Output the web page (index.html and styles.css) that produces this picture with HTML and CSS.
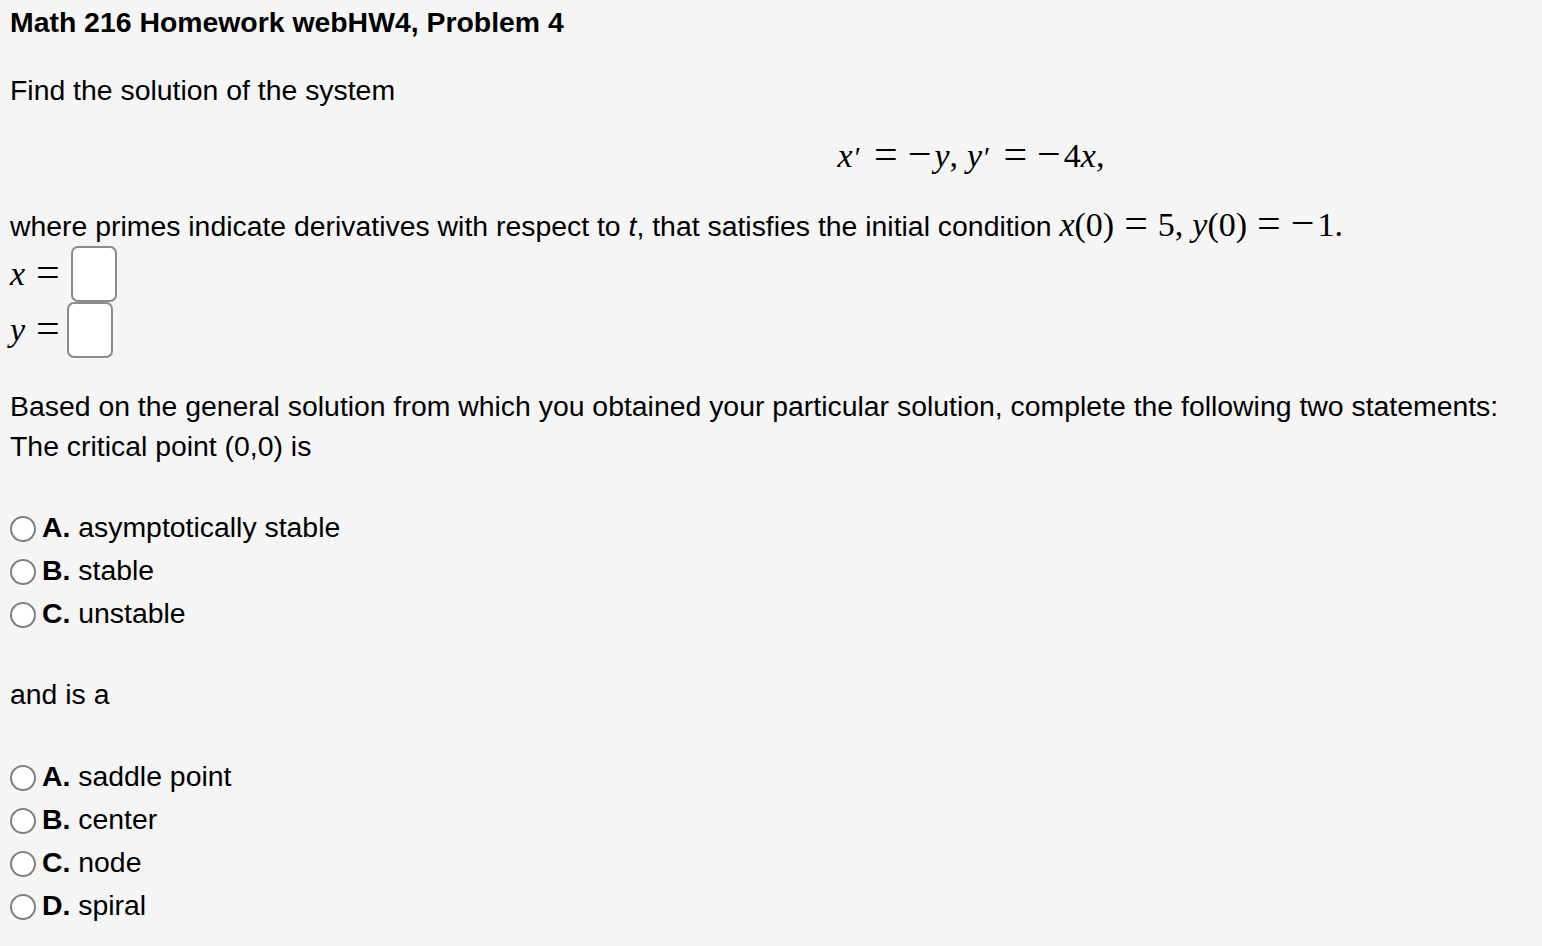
FILE: index.html
```html
<!DOCTYPE html>
<html lang="en">
<head>
    <meta charset="UTF-8">
    <title>Math 216 Homework webHW4, Problem 4</title>
    <link rel="stylesheet" href="styles.css">
</head>
<body>
    <h1 class="title">Math 216 Homework webHW4, Problem 4</h1>

    <p class="intro">Find the solution of the system</p>

    <div class="display-math">
        <span class="mi">x</span><span class="prime">&prime;</span><span class="mo">=</span><span class="neg">&minus;</span><span class="mi">y</span>,<span class="thin"></span><span class="mi">y</span><span class="prime">&prime;</span><span class="mo">=</span><span class="neg">&minus;</span>4<span class="mi">x</span>,
    </div>

    <p class="statement">where primes indicate derivatives with respect to <i>t</i>, that satisfies the initial condition <span class="math"><span class="mi">x</span>(0)<span class="mo">=</span>5,<span class="thin"></span><span class="mi">y</span>(0)<span class="mo">=</span><span class="neg">&minus;</span>1.</span></p>

    <div class="answers">
        <div class="answer-row">
            <span class="math label"><span class="mi">x</span><span class="mo">=</span></span>
            <input type="text" class="answer-box x-box">
        </div>
        <div class="answer-row">
            <span class="math label"><span class="mi">y</span><span class="mo">=</span></span>
            <input type="text" class="answer-box">
        </div>
    </div>

    <p class="question">Based on the general solution from which you obtained your particular solution, complete the following two statements:<br>The critical point (0,0) is</p>

    <div class="choices first">
        <label class="choice"><input type="radio" name="stab"><b>A.</b>&nbsp;asymptotically stable</label>
        <label class="choice"><input type="radio" name="stab"><b>B.</b>&nbsp;stable</label>
        <label class="choice"><input type="radio" name="stab"><b>C.</b>&nbsp;unstable</label>
    </div>

    <p class="between">and is a</p>

    <div class="choices second">
        <label class="choice"><input type="radio" name="kind"><b>A.</b>&nbsp;saddle point</label>
        <label class="choice"><input type="radio" name="kind"><b>B.</b>&nbsp;center</label>
        <label class="choice"><input type="radio" name="kind"><b>C.</b>&nbsp;node</label>
        <label class="choice"><input type="radio" name="kind"><b>D.</b>&nbsp;spiral</label>
    </div>
</body>
</html>
```

FILE: styles.css
```css
body {
    font-family: 'Liberation Sans', Arial, sans-serif;
    font-size: 28.4px;
    line-height: 32px;
    color: #000;
    background: #f5f5f5;
    margin: 0;
    padding: 6px 10px 0 10px;
}

.title {
    font-size: 28.4px;
    line-height: 32px;
    font-weight: bold;
    margin: 0;
}

p {
    margin: 0;
}

.intro {
    margin-top: 36px;
}

/* math bits */
.display-math,
.math {
    font-family: 'Liberation Serif', 'Times New Roman', serif;
    font-size: 34px;
}

.math {
    line-height: 0;
}

.display-math {
    text-align: center;
    padding-left: 400px;
    margin-top: 34px;
    margin-bottom: 38px;
    height: 32px;
    line-height: 32px;
}

.mi {
    font-style: italic;
}

.prime {
    font-size: 0.85em;
    margin-left: 2px;
    margin-right: 3px;
}

.mo {
    font-size: 42px;
    line-height: 0;
    padding: 0 10px;
    vertical-align: -1px;
}

.neg {
    font-size: 42px;
    line-height: 0;
    vertical-align: -1px;
    margin-right: 3px;
}

.thin {
    display: inline-block;
    width: 9px;
}

.statement {
    margin-bottom: 4px;
}

.answer-row {
    display: flex;
    align-items: center;
    height: 56px;
}

.label {
    line-height: 32px;
    margin-right: 7px;
}

.label .mo {
    padding-left: 11px;
    padding-right: 0;
}

.answer-box {
    width: 46px;
    height: 56px;
    box-sizing: border-box;
    border: 2px solid #8a8a8a;
    border-radius: 7px;
    background: #fff;
    padding: 0;
    margin: 0;
}

.x-box {
    margin-left: 4px;
}

.question {
    margin-top: 28px;
    line-height: 40px;
}

.choices.first {
    margin-top: 39px;
}

.between {
    margin-top: 44px;
}

.choices.second {
    margin-top: 44px;
}

.choice {
    display: flex;
    align-items: center;
    height: 43px;
}

.choice input {
    appearance: none;
    -webkit-appearance: none;
    width: 26px;
    height: 26px;
    box-sizing: border-box;
    border: 2px solid #808080;
    border-radius: 50%;
    background: #fff;
    margin: 4px 6px 0 0;
}

.choice b {
    font-weight: bold;
}
```
